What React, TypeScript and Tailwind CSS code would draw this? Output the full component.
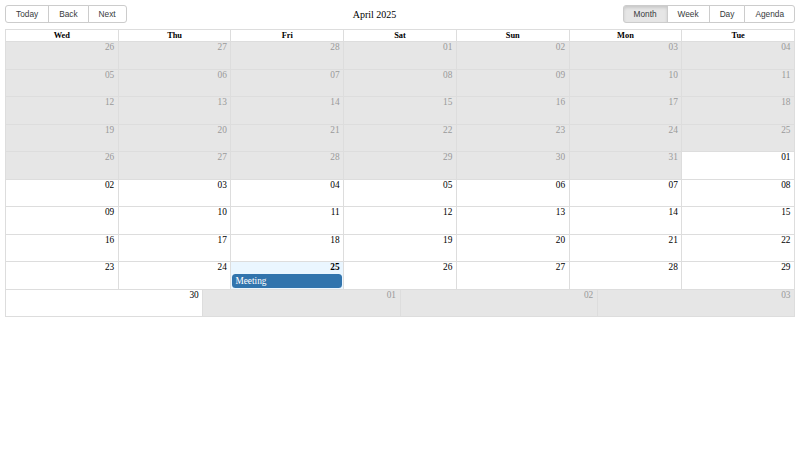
import React from 'react';

type Cell = { label: string; off?: boolean; today?: boolean; event?: string };

const DAYS = ['Wed', 'Thu', 'Fri', 'Sat', 'Sun', 'Mon', 'Tue'];

function buildRows(): Cell[][] {
  const pad = (n: number) => String(n).padStart(2, '0');
  const rows: Cell[][] = [];
  // stale leading weeks, all off-range
  const lead = [
    [26, 27, 28, 1, 2, 3, 4],
    [5, 6, 7, 8, 9, 10, 11],
    [12, 13, 14, 15, 16, 17, 18],
    [19, 20, 21, 22, 23, 24, 25],
  ];
  lead.forEach((w) => rows.push(w.map((d) => ({ label: pad(d), off: true }))));
  rows.push([
    ...[26, 27, 28, 29, 30, 31].map((d) => ({ label: pad(d), off: true })),
    { label: '01' },
  ]);
  for (let start = 2; start <= 23; start += 7) {
    rows.push(
      Array.from({ length: 7 }, (_, i) => {
        const d = start + i;
        return d === 25
          ? { label: '25', today: true, event: 'Meeting' }
          : { label: pad(d) };
      }),
    );
  }
  return rows;
}

const lastRow: Cell[] = [
  { label: '30' },
  { label: '01', off: true },
  { label: '02', off: true },
  { label: '03', off: true },
];

function ToolButton({
  children,
  first,
  last,
  active,
}: {
  children: React.ReactNode;
  first?: boolean;
  last?: boolean;
  active?: boolean;
}) {
  return (
    <button
      className={[
        'h-[18px] px-[10px] border border-[#ccc] text-[8.3px] text-[#373a3c] leading-none',
        first ? 'rounded-l-[3px]' : '-ml-px',
        last ? 'rounded-r-[3px]' : '',
        active
          ? 'bg-[#e6e6e6] border-[#adadad] shadow-[inset_0_2px_3px_rgba(0,0,0,0.125)]'
          : 'bg-white',
      ].join(' ')}
      style={{ fontFamily: '"Liberation Sans", Arial, sans-serif' }}
    >
      {children}
    </button>
  );
}

function DayCell({ cell, first }: { cell: Cell; first?: boolean }) {
  return (
    <div
      className={[
        'flex-1 min-w-0 flex flex-col',
        first ? '' : 'border-l border-[#ddd]',
        cell.off ? 'bg-[#e6e6e6]' : cell.today ? 'bg-[#eaf6ff]' : 'bg-white',
      ].join(' ')}
    >
      <div
        className={[
          'text-right pr-[3.5px] leading-[11px] h-[11px] text-[9.33px]',
          cell.off ? 'text-[#999]' : 'text-black',
          cell.today ? 'font-bold' : '',
        ].join(' ')}
      >
        {cell.label}
      </div>
      {cell.event && (
        <div className="mx-px mt-px">
          <div className="bg-[#3174ad] text-white rounded-[3.5px] px-[3px] py-[1.5px] text-[9.33px] leading-[11px] truncate">
            {cell.event}
          </div>
        </div>
      )}
    </div>
  );
}

export default function App() {
  const rows = buildRows();
  return (
    <div
      className="w-[800px] h-[450px] bg-white p-[5px] flex flex-col"
      style={{ fontFamily: '"Liberation Serif", "Times New Roman", serif' }}
    >
      {/* Toolbar */}
      <div className="flex items-center mb-[6px]">
        <div className="flex">
          <ToolButton first>Today</ToolButton>
          <ToolButton>Back</ToolButton>
          <ToolButton last>Next</ToolButton>
        </div>
        <span className="flex-1 text-center text-[10px] text-black">April 2025</span>
        <div className="flex">
          <ToolButton first active>Month</ToolButton>
          <ToolButton>Week</ToolButton>
          <ToolButton>Day</ToolButton>
          <ToolButton last>Agenda</ToolButton>
        </div>
      </div>

      {/* Month view */}
      <div className="h-[288px] border border-[#ddd] flex flex-col">
        <div className="flex h-[12px] border-b border-[#ddd]">
          {DAYS.map((d, i) => (
            <div
              key={d}
              className={[
                'flex-1 text-center font-bold text-[8.4px] leading-[11px] text-black',
                i === 0 ? '' : 'border-l border-[#ddd]',
              ].join(' ')}
            >
              {d}
            </div>
          ))}
        </div>
        {rows.map((r, ri) => (
          <div key={ri} className={['flex flex-1', ri === 0 ? '' : 'border-t border-[#ddd]'].join(' ')}>
            {r.map((c, ci) => (
              <DayCell key={ci} cell={c} first={ci === 0} />
            ))}
          </div>
        ))}
        <div className="flex flex-1 border-t border-[#ddd]">
          {lastRow.map((c, ci) => (
            <DayCell key={ci} cell={c} first={ci === 0} />
          ))}
        </div>
      </div>
    </div>
  );
}
